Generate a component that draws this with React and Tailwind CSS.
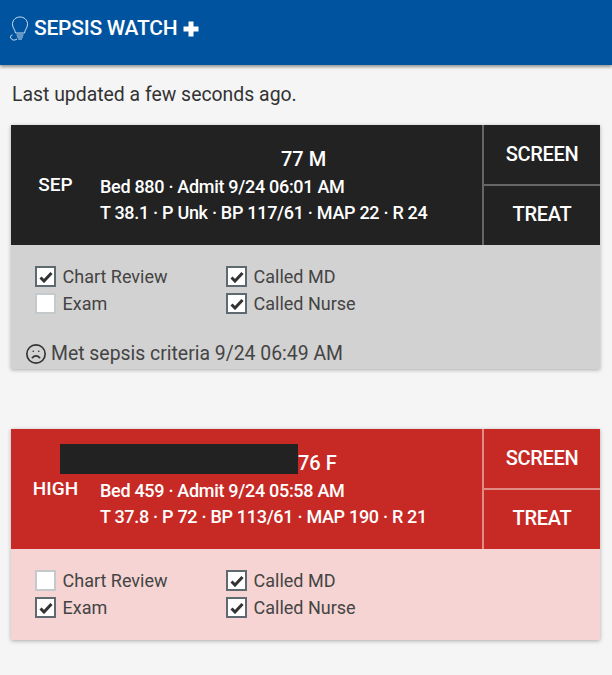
import React from 'react';
import { Frown } from 'lucide-react';

const CheckRow = ({ label, checked }) => (
  <label className="flex items-center gap-[6.5px] h-[21px] text-[18px] leading-[21px] text-[#444]">
    <span className={`flex items-center justify-center w-[21px] h-[21px] bg-white border-2 ${checked ? 'border-[#5f6a70]' : 'border-[#c4c9cc]'}`}>
      {checked && (
        <svg width="14" height="12" viewBox="0 0 14 12">
          <path d="M1.5 6.5 L5 10 L12.5 2" fill="none" stroke="#333" strokeWidth="3" />
        </svg>
      )}
    </span>
    {label}
  </label>
);

const PatientCard = ({ risk, age, bed, vitals, head, divider, body, redacted, checks, note }) => (
  <div className={`ml-[11px] mr-[12px] shadow-[0_1px_4px_rgba(0,0,0,0.3)] ${body}`}>
    <div className={`flex h-[120px] text-white ${head}`}>
      <div className="w-[89px] shrink-0 flex items-center justify-center text-[19px] font-medium">{risk}</div>
      <div className="flex-1 flex flex-col pt-[21px]">
        {redacted ? (
          <div className="flex items-end h-[28px] text-[20px] leading-[26px] font-medium">
            <span className="w-[238px] h-[30px] ml-[-40px] mb-[4px] bg-[#222] shrink-0" />
            <span className="mb-[2px]">{age}</span>
          </div>
        ) : (
          <div className="h-[28px] pl-[181px] text-[20px] leading-[26px] font-medium">{age}</div>
        )}
        <div className="text-[18px] leading-[26px] font-medium tracking-[-0.3px]">{bed}</div>
        <div className="text-[18px] leading-[26px] font-medium tracking-[-0.3px]">{vitals}</div>
      </div>
      <div className={`w-[118px] shrink-0 flex flex-col border-l-2 ${divider}`}>
        <button className={`h-[61px] pb-[2px] text-[20px] font-medium tracking-[-0.3px] border-b-2 ${divider}`}>SCREEN</button>
        <button className="flex-1 text-[20px] font-medium tracking-[-0.3px] pb-[3px]">TREAT</button>
      </div>
    </div>
    <div className="pt-[21px] pl-[24px] pb-[22px]">
      <div className="grid grid-cols-[191px_1fr] gap-y-[6px]">
        {checks.map(([label, checked]) => (
          <CheckRow key={label} label={label} checked={checked} />
        ))}
      </div>
      {note && (
        <div className="flex items-center gap-[4px] mt-[27px] -mb-[20px] -ml-[10px] text-[19.4px] leading-[26px] text-[#444]">
          <Frown size={22} strokeWidth={1.8} className="text-[#333]" />
          {note}
        </div>
      )}
    </div>
  </div>
);

export default function App() {
  return (
    <div className="min-h-[675px] bg-[#f5f5f5] font-['Roboto',sans-serif]">
      <header className="flex items-center h-[65px] pl-[10px] pb-[8px] bg-[#00539f] text-white shadow-[0_2px_3px_rgba(0,0,0,0.4)]">
        <svg width="20" height="26" viewBox="0 0 20 26" fill="none" stroke="white" strokeWidth="0.8">
          <path d="M5.5 17 C5 13 2 11.5 2.5 7.5 C3 3.5 6 1 10 1 C14 1 17 3.5 17.5 7.5 C18 11.5 15 13 14.5 17 Z" />
          <path d="M6.5 19 H13.5 M7 21 H13 M8 23 H12" />
          <path d="M7 23 C4 25 1 24 0.5 21 C0.5 19.5 1.5 19 2.5 19" />
        </svg>
        <span className="ml-[4px] text-[21px] font-medium tracking-[-0.25px]">SEPSIS WATCH</span>
        <svg className="ml-[6px]" width="16" height="16" viewBox="0 0 16 16">
          <path d="M5.5 0.5 H10.5 V5.5 H15.5 V10.5 H10.5 V15.5 H5.5 V10.5 H0.5 V5.5 H5.5 Z" fill="white" />
        </svg>
      </header>
      <p className="mt-[17px] mb-[18px] ml-[12px] text-[19.4px] leading-[25px] text-[#333]">Last updated a few seconds ago.</p>
      <PatientCard
        risk="SEP"
        age="77 M"
        bed="Bed 880 · Admit 9/24 06:01 AM"
        vitals="T 38.1 · P Unk · BP 117/61 · MAP 22 · R 24"
        head="bg-[#222222]"
        divider="border-[#666666]"
        body="bg-[#d2d2d2]"
        checks={[['Chart Review', true], ['Called MD', true], ['Exam', false], ['Called Nurse', true]]}
        note="Met sepsis criteria 9/24 06:49 AM"
      />
      <div className="h-[60px]" />
      <PatientCard
        risk="HIGH"
        age="76 F"
        bed="Bed 459 · Admit 9/24 05:58 AM"
        vitals="T 37.8 · P 72 · BP 113/61 · MAP 190 · R 21"
        head="bg-[#c72a25]"
        divider="border-[#e28a86]"
        body="bg-[#f5d4d3]"
        redacted
        checks={[['Chart Review', false], ['Called MD', true], ['Exam', true], ['Called Nurse', true]]}
      />
    </div>
  );
}
